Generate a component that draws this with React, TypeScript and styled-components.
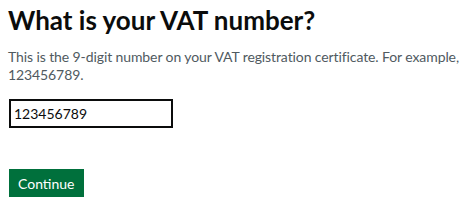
import React from "react";
import styled, { createGlobalStyle } from "styled-components";

const GlobalStyle = createGlobalStyle`
  html, body {
    margin: 0;
    padding: 0;
    background: #ffffff;
  }
  body {
    font-family: Lato, "Liberation Sans", Arial, sans-serif;
    color: #0b0c0c;
  }
`;

const Page = styled.main`
  padding: 4px 8px 0 8px;
`;

const Heading = styled.h1`
  margin: 0 0 12px;
  font-size: 26px;
  line-height: 32px;
  font-weight: 700;
`;

const Hint = styled.p`
  margin: 0 0 15px;
  font-size: 14px;
  line-height: 18px;
  letter-spacing: -0.1px;
  color: #505a5f;
`;

const Input = styled.input`
  box-sizing: border-box;
  display: block;
  width: 164px;
  height: 29px;
  margin: 0 0 41px 1px;
  padding: 0 3px;
  border: 2px solid #0b0c0c;
  border-radius: 0;
  outline: none;
  font-family: inherit;
  font-size: 14px;
  color: #0b0c0c;
`;

const Button = styled.button`
  display: inline-block;
  margin-left: 1px;
  padding: 6px 9px 4px;
  border: 0;
  border-radius: 0;
  background: #00703c;
  box-shadow: 0 2px 0 #002d18;
  color: #ffffff;
  font-family: inherit;
  font-size: 14px;
  line-height: 18px;
  cursor: pointer;
`;

export default function App() {
  return (
    <>
      <GlobalStyle />
      <Page>
        <Heading>What is your VAT number?</Heading>
        <Hint>
          This is the 9-digit number on your VAT registration certificate. For example,
          123456789.
        </Hint>
        <Input defaultValue="123456789" aria-label="VAT number" />
        <Button type="button">Continue</Button>
      </Page>
    </>
  );
}
